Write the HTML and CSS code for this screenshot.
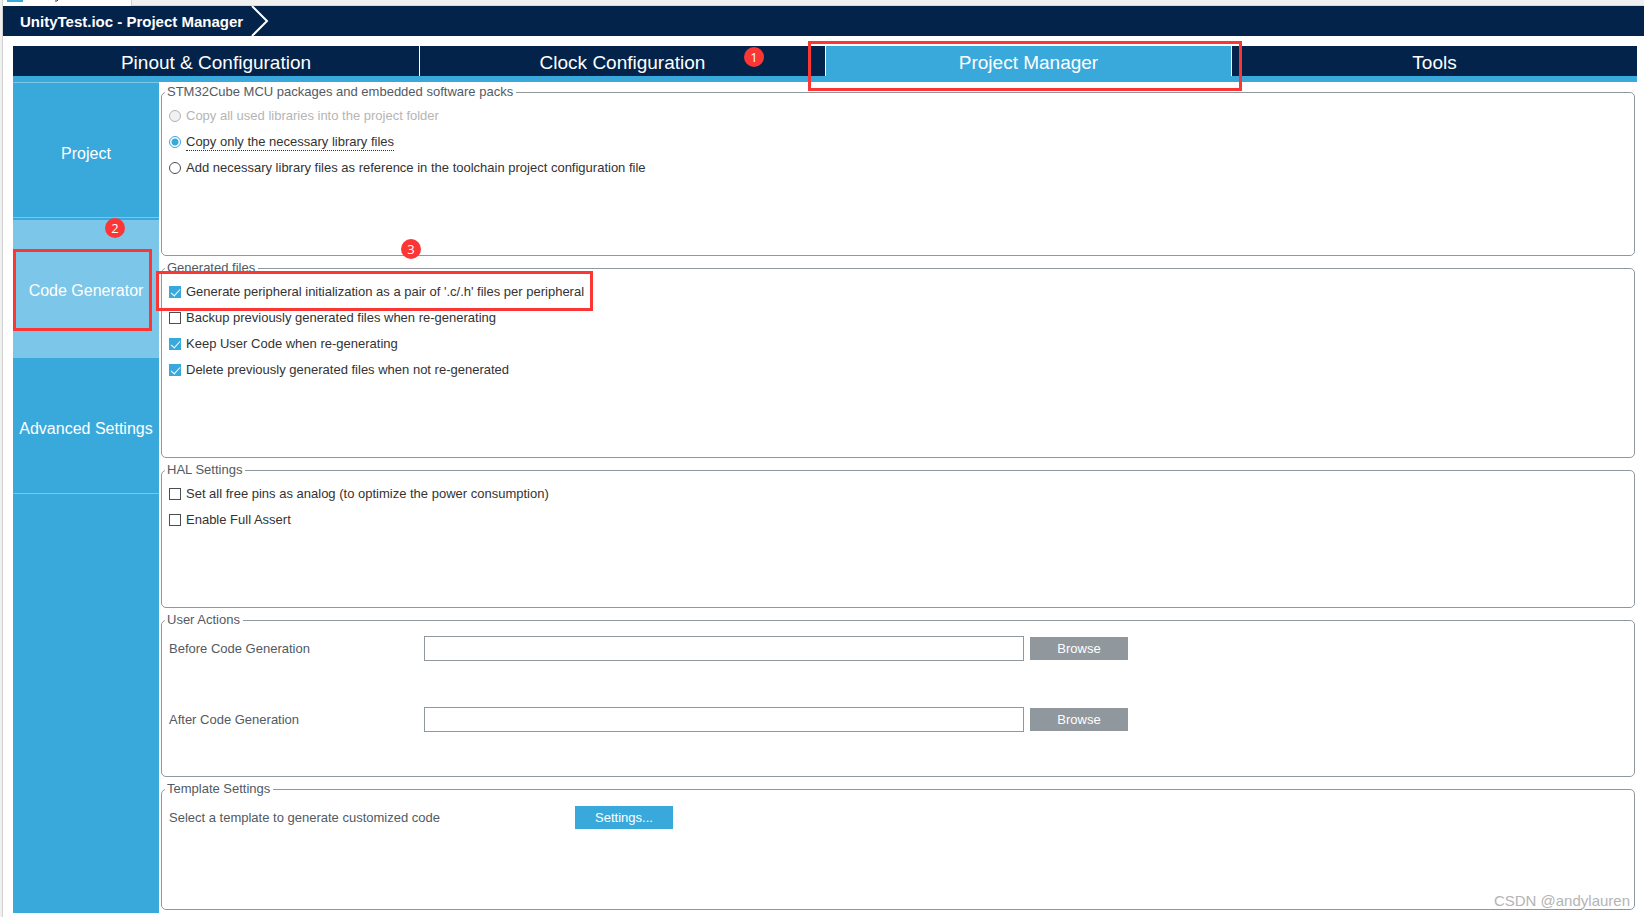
FILE: index.html
```html
<!DOCTYPE html>
<html lang="en">

<head>
    <meta charset="UTF-8">
    <meta name="viewport" content="width=device-width, initial-scale=1.0">
    <title>UnityTest.ioc - Project Manager</title>
    <link rel="stylesheet" href="styles.css">
</head>

<body>
<div class="window">

    <!-- Editor tab strip -->
    <div class="editor-strip">
        <div class="editor-tab">
            <svg width="125" height="5" viewBox="0 0 125 5">
                <rect x="0" y="0" width="16" height="2" fill="#39a9dc"/>
                <path d="M51 0 L50 1 H48" fill="none" stroke="#333"/>
            </svg>
        </div>
    </div>

    <!-- Breadcrumb -->
    <header class="breadcrumb">
        <h1>UnityTest.ioc - Project Manager</h1>
        <svg class="chevron" width="18" height="30" viewBox="0 0 18 30">
            <path d="M1 0 L16 15 L1 30" fill="none" stroke="#fff" stroke-width="2"/>
        </svg>
    </header>

    <div class="content">
        <nav class="tabs">
            <button class="tab">Pinout &amp; Configuration</button>
            <button class="tab">Clock Configuration<span class="badge badge-1">1</span></button>
            <button class="tab active">Project Manager<span class="mark mark-tab"></span></button>
            <button class="tab">Tools</button>
        </nav>

        <div class="workspace">
            <nav class="sidebar">
                <button class="side-item">Project</button>
                <button class="side-item active">Code Generator<span class="badge badge-2">2</span><span class="mark mark-side"></span></button>
                <button class="side-item">Advanced Settings</button>
            </nav>

            <main class="panel">
                <fieldset class="group packages">
                    <legend>STM32Cube MCU packages and embedded software packs</legend>
                    <label class="option disabled"><input type="radio" name="lib" disabled><span>Copy all used libraries into the project folder</span></label>
                    <label class="option"><input type="radio" name="lib" checked><span class="focused">Copy only the necessary library files</span></label>
                    <label class="option"><input type="radio" name="lib"><span>Add necessary library files as reference in the toolchain project configuration file</span></label>
                </fieldset>

                <fieldset class="group files">
                    <legend>Generated files</legend>
                    <label class="option"><input type="checkbox" checked><span>Generate peripheral initialization as a pair of '.c/.h' files per peripheral</span></label>
                    <label class="option"><input type="checkbox"><span>Backup previously generated files when re-generating</span></label>
                    <label class="option"><input type="checkbox" checked><span>Keep User Code when re-generating</span></label>
                    <label class="option"><input type="checkbox" checked><span>Delete previously generated files when not re-generated</span></label>
                    <span class="badge badge-3">3</span>
                    <span class="mark mark-option"></span>
                </fieldset>

                <fieldset class="group hal">
                    <legend>HAL Settings</legend>
                    <label class="option"><input type="checkbox"><span>Set all free pins as analog (to optimize the power consumption)</span></label>
                    <label class="option"><input type="checkbox"><span>Enable Full Assert</span></label>
                </fieldset>

                <fieldset class="group actions">
                    <legend>User Actions</legend>
                    <div class="row">
                        <label for="before">Before Code Generation</label>
                        <input type="text" id="before">
                        <button class="btn">Browse</button>
                    </div>
                    <div class="row">
                        <label for="after">After Code Generation</label>
                        <input type="text" id="after">
                        <button class="btn">Browse</button>
                    </div>
                </fieldset>

                <fieldset class="group template">
                    <legend>Template Settings</legend>
                    <div class="row">
                        <label for="settings">Select a template to generate customized code</label>
                        <button class="btn primary" id="settings">Settings...</button>
                    </div>
                </fieldset>
            </main>
        </div>
    </div>

    <div class="watermark">CSDN @andylauren</div>
</div>
</body>

</html>
```
FILE: styles.css
```css
* {
    box-sizing: border-box;
}

body {
    margin: 0;
    background: #fff;
    border-left: 2px solid #f0f0f0;
    font-family: "Liberation Sans", Arial, sans-serif;
    font-size: 13px;
    color: #333;
}

button, input {
    font-family: inherit;
    font-size: inherit;
}

button {
    margin: 0;
    padding: 0;
    border: none;
    color: #fff;
    cursor: pointer;
}

.window {
    position: relative;
    min-height: 100vh;
    border-left: 1px solid #d2d2d2;
}

/* Editor strip */

.editor-strip {
    height: 6px;
    background: #f0f0f0;
    border-bottom: 1px solid #d5dcdc;
}

.editor-tab {
    width: 129px;
    height: 6px;
    padding-left: 4px;
    background: #fff;
    border-right: 1px solid #d2d2d2;
}

.editor-tab svg {
    display: block;
}

/* Breadcrumb */

.breadcrumb {
    display: flex;
    align-items: center;
    gap: 8px;
    height: 30px;
    padding-left: 17px;
    background: #03234b;
}

.breadcrumb h1 {
    margin: 0;
    padding-top: 2px;
    color: #fff;
    font-size: 15px;
    line-height: 20px;
}

.chevron {
    display: block;
}

/* Top tabs */

.content {
    padding: 10px 7px 5px 10px;
}

.tabs {
    display: grid;
    grid-template-columns: repeat(4, 1fr);
    border-bottom: 6px solid #39a9dc;
}

.tab {
    position: relative;
    height: 30px;
    padding-top: 4px;
    background: #03234b;
    font-size: 19px;
    line-height: 24px;
}

.tab + .tab {
    border-left: 1px solid #fff;
}

.tab.active {
    background: #39a9dc;
}

/* Sidebar */

.workspace {
    display: flex;
}

.sidebar {
    flex: none;
    width: 146px;
    background: #39a9dc;
}

.side-item {
    position: relative;
    display: block;
    width: 100%;
    height: 138px;
    padding-top: 4px;
    background: linear-gradient(#7bc6e9, #7bc6e9) 0 135px / 100% 1px no-repeat #39a9dc;
    font-size: 16px;
    white-space: nowrap;
}

.side-item:first-child {
    border-top: 1px solid #7bc6e9;
    background-position: 0 134px;
}

.side-item.active {
    background: #7bc6e9;
}

/* Group boxes */

.panel {
    flex: 1;
    display: flex;
    flex-direction: column;
    gap: 4px;
    padding: 2px 2px 3px 2px;
}

.group {
    position: relative;
    min-width: 0;
    margin: 0;
    padding: 3px 7px 0 3px;
    border: 1px solid #90989e;
    border-radius: 5px;
}

.group legend {
    padding: 0 3px 0 2px;
    color: #525a63;
    line-height: 16px;
}

.packages { height: 172px; }
.files { height: 198px; }
.hal { height: 146px; }
.actions { height: 165px; }
.template { height: 129px; }

.option {
    display: flex;
    align-items: center;
    gap: 5px;
    width: max-content;
    height: 26px;
    padding-left: 4px;
    line-height: 16px;
}

.option.disabled {
    color: #b5b5b5;
}

.focused {
    border-bottom: 1px dotted #333;
}

.option input {
    position: relative;
    appearance: none;
    width: 12px;
    height: 12px;
    margin: 0;
    background: #fff;
    border: 1px solid #4a4f55;
}

.option input[type="radio"] {
    border-radius: 50%;
}

.option input[type="radio"]:disabled {
    background: #f0f1f2;
    border-color: #b0b4b8;
}

.option input[type="radio"]:checked {
    background: radial-gradient(circle, #39a9dc 3px, #fff 4px);
    border-color: #39a9dc;
}

.option input[type="checkbox"]:checked {
    background: #39a9dc;
    border-color: #39a9dc;
}

.option input[type="checkbox"]:checked::after {
    content: "";
    position: absolute;
    left: 3px;
    top: 0;
    width: 4px;
    height: 8px;
    border: solid #fff;
    border-width: 0 1px 1px 0;
    transform: rotate(42deg);
}

/* Label / field / button rows */

.row {
    display: grid;
    grid-template-columns: 249px 600px 98px;
    align-items: center;
    gap: 0 6px;
    padding: 5px 0 0 4px;
    color: #525a63;
}

.row label {
    white-space: nowrap;
}

.row + .row {
    padding-top: 46px;
}

.row input {
    width: 100%;
    height: 25px;
    padding: 2px 4px;
    border: 1px solid #90989e;
    background: #fff;
}

.btn {
    height: 23px;
    background: #90989e;
}

.btn.primary {
    background: #39a9dc;
}

.template .row {
    grid-template-columns: 400px 98px;
    padding-top: 6px;
}

/* Numbered steps and highlight frames */

.badge {
    position: absolute;
    width: 20px;
    height: 20px;
    border-radius: 50%;
    background: #fc3635;
    color: #fff;
    font-family: "Open Sans", sans-serif;
    font-size: 13px;
    line-height: 20px;
    text-align: center;
}

.badge-1 { right: 61px; top: 1px; }
.badge-2 { left: 92px; top: -2px; }
.badge-3 { left: 239px; top: -37px; }

.mark {
    position: absolute;
    z-index: 1;
    border: 3px solid #fc3635;
    pointer-events: none;
}

.mark-tab { left: -18px; right: -11px; top: -5px; height: 50px; }
.mark-side { left: 0; right: 7px; top: 29px; height: 82px; }
.mark-option { left: -6px; top: -5px; width: 437px; height: 40px; }

.watermark {
    position: absolute;
    right: 14px;
    bottom: 8px;
    color: #b4b4b4;
    font-size: 15px;
    line-height: 18px;
    text-shadow: 1px 1px 0 #fff;
}
```
